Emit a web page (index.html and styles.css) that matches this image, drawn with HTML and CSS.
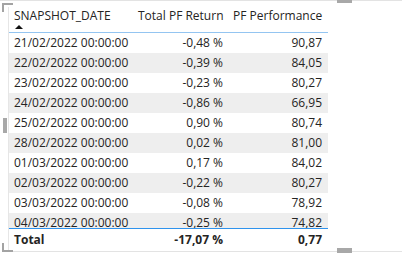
FILE: index.html
```html
<!DOCTYPE html>
<html>
<head>
<meta charset="utf-8">
<link rel="stylesheet" href="styles.css">
</head>
<body>
<div class="visual">
  <div class="frame">
    <div class="table">
      <div class="thead">
        <div class="hcell">
          <div class="htext">SNAPSHOT_DATE</div>
          <svg class="sort" width="8" height="4" viewBox="0 0 8 4"><polygon points="0,4 8,4 4,0" fill="#111111"/></svg>
        </div>
        <div class="hcell num"><div class="htext">Total PF Return</div></div>
        <div class="hcell num last"><div class="htext">PF Performance</div></div>
      </div>
      <div class="tbody">
        <div class="row"><div class="cell">21/02/2022 00:00:00</div><div class="cell num">-0,48 %</div><div class="cell num last">90,87</div></div>
        <div class="row alt"><div class="cell">22/02/2022 00:00:00</div><div class="cell num">-0,39 %</div><div class="cell num last">84,05</div></div>
        <div class="row"><div class="cell">23/02/2022 00:00:00</div><div class="cell num">-0,23 %</div><div class="cell num last">80,27</div></div>
        <div class="row alt"><div class="cell">24/02/2022 00:00:00</div><div class="cell num">-0,86 %</div><div class="cell num last">66,95</div></div>
        <div class="row"><div class="cell">25/02/2022 00:00:00</div><div class="cell num">0,90 %</div><div class="cell num last">80,74</div></div>
        <div class="row alt"><div class="cell">28/02/2022 00:00:00</div><div class="cell num">0,02 %</div><div class="cell num last">81,00</div></div>
        <div class="row"><div class="cell">01/03/2022 00:00:00</div><div class="cell num">0,17 %</div><div class="cell num last">84,02</div></div>
        <div class="row alt"><div class="cell">02/03/2022 00:00:00</div><div class="cell num">-0,22 %</div><div class="cell num last">80,27</div></div>
        <div class="row"><div class="cell">03/03/2022 00:00:00</div><div class="cell num">-0,08 %</div><div class="cell num last">78,92</div></div>
        <div class="row alt"><div class="cell">04/03/2022 00:00:00</div><div class="cell num">-0,25 %</div><div class="cell num last">74,82</div></div>
      </div>
      <div class="tfoot">
        <div class="cell">Total</div>
        <div class="cell num">-17,07 %</div>
        <div class="cell num last">0,77</div>
      </div>
    </div>
  </div>
  <span class="corner corner-tl"></span>
  <span class="corner corner-bl"></span>
  <span class="handle handle-top"></span>
  <span class="handle handle-bottom"></span>
  <span class="handle handle-left"></span>
</div>
</body>
</html>
```
FILE: styles.css
```css
html, body {
  margin: 0;
  padding: 0;
  background: #ffffff;
}

.visual {
  position: relative;
  width: 402px;
  height: 259px;
  box-sizing: border-box;
  border-top: 1px solid #e3e3e3;
  padding-top: 6px;
  font-family: "Open Sans", "Noto Sans", sans-serif;
  font-size: 12px;
  color: #252423;
}

.frame {
  margin-left: 8px;
  height: 245px;
  box-sizing: border-box;
  border-left: 1px solid #e6e6e6;
  border-bottom: 1px solid #e3e3e3;
}

.table {
  width: 319px;
}

.thead,
.row,
.tfoot {
  display: grid;
  grid-template-columns: 124px 95px 100px;
}

.cell {
  padding: 0 5px;
  line-height: 20px;
  white-space: nowrap;
  overflow: hidden;
}

.num {
  text-align: right;
}

.last {
  padding-right: 6px;
}

.thead {
  border-bottom: 1px solid #94c5f1;
}

.hcell {
  display: flex;
  flex-direction: column;
  padding: 0 5px 3px;
  line-height: 16px;
  white-space: nowrap;
}

.hcell.last {
  padding-right: 6px;
}

.htext {
  height: 18px;
  padding-top: 1px;
  box-sizing: border-box;
}

.sort {
  display: block;
  flex: none;
  width: 8px;
  height: 4px;
  margin-left: 1px;
}

.tbody {
  height: 195px;
  overflow: hidden;
}

.row {
  height: 20px;
}

.alt {
  background: #eeeeee;
}

.tfoot {
  border-top: 1px solid #2f93ed;
  font-weight: 700;
  padding-top: 1px;
  height: 21px;
}

.corner {
  position: absolute;
  width: 9px;
  height: 7px;
  border-color: #a3a3a3;
  border-style: solid;
  border-width: 0;
}

.corner-tl {
  left: 2px;
  top: 2px;
  border-top-width: 2px;
  border-left-width: 2px;
}

.corner-bl {
  left: 2px;
  top: 242px;
  border-bottom-width: 2px;
  border-left-width: 2px;
}

.handle {
  position: absolute;
  background: #a8a8a8;
}

.handle-top {
  left: 337px;
  top: -1px;
  width: 15px;
  height: 3px;
}

.handle-bottom {
  left: 337px;
  top: 247px;
  width: 15px;
  height: 5px;
}

.handle-left {
  left: 3px;
  top: 117px;
  width: 4px;
  height: 15px;
}
```
